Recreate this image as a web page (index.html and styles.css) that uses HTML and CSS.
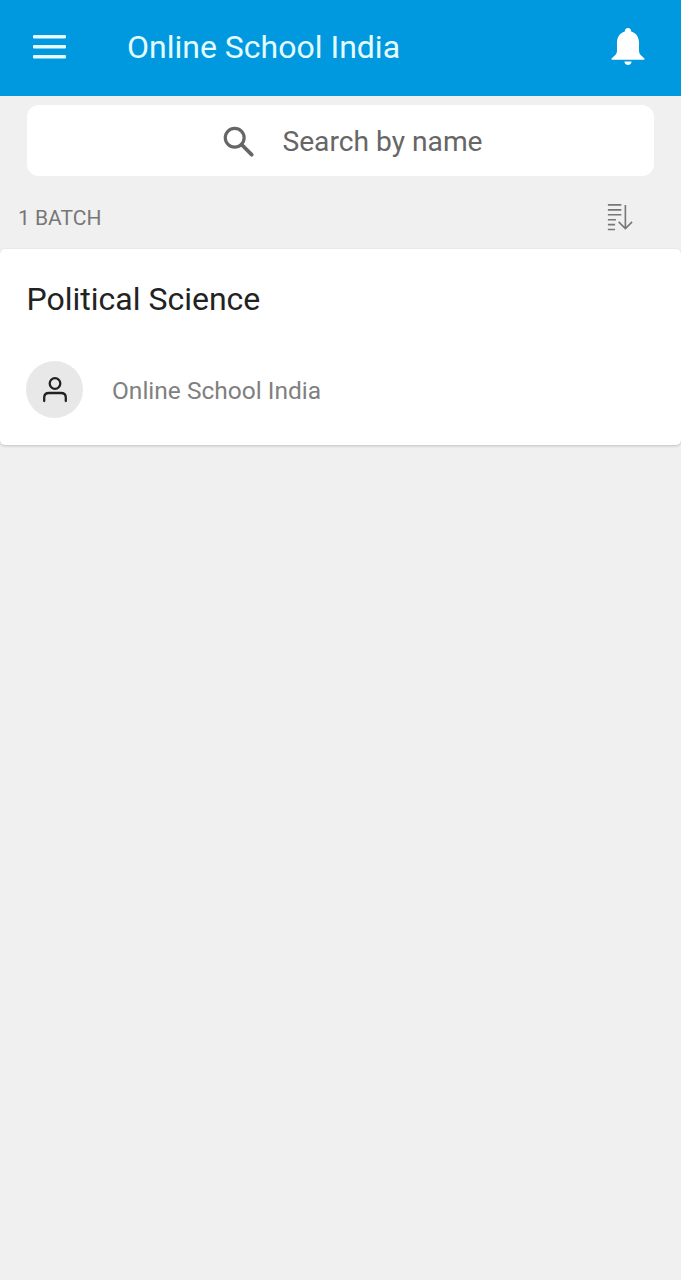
FILE: index.html
```html
<!DOCTYPE html>
<html>
<head>
  <title>Online School India</title>
  <link rel="stylesheet" href="styles.css">
</head>
<body>
  <header class="app-bar">
    <svg class="menu-icon" width="34" height="24" viewBox="0 0 34 24">
      <rect x="0" y="0" width="33" height="3.4" rx="1" fill="#e4fbff"/>
      <rect x="0" y="10" width="33" height="3.4" rx="1" fill="#e4fbff"/>
      <rect x="0" y="20" width="33" height="3.4" rx="1" fill="#e4fbff"/>
    </svg>
    <div class="app-title">Online School India</div>
    <svg class="bell-icon" width="34" height="40" viewBox="0 0 34 40">
      <path d="M17 0c-2 0-3.200 1.500-3.200 3.400C8.500 4.900 6 9.300 6 14.500V23c0 2.800-2 4.600-5.200 7.200-.6.600-.4 1.600.6 1.600h31.200c1 0 1.200-1 .6-1.600C30 27.600 28 25.800 28 23v-8.500c0-5.200-2.500-9.600-7.800-11.100C20.200 1.500 19 0 17 0z" fill="#fff"/>
      <path d="M13.500 33.500h7c0 2-1.500 3.500-3.500 3.500s-3.500-1.500-3.500-3.500z" fill="#fff"/>
    </svg>
  </header>

  <div class="search-box">
    <svg class="search-icon" width="32" height="32" viewBox="0 0 34 34">
      <circle cx="13.500" cy="13.500" r="10" fill="none" stroke="#666" stroke-width="3.400"/>
      <path d="M21 21l10.500 10.500" stroke="#666" stroke-width="4" stroke-linecap="round"/>
    </svg>
    <span class="search-text">Search by name</span>
  </div>

  <div class="list-head">
    <span class="batch-count">1 BATCH</span>
    <svg class="sort-icon" width="26" height="28" viewBox="0 0 29 31">
      <g stroke="#777" stroke-width="1.800" fill="none">
        <path d="M1 2h15M1 7.500h15M1 13h15M1 18.500h9M1 24h8M1 29.500h8"/>
        <path d="M20.500 2v26M13 21l7.500 7.500 7.500-7.500"/>
      </g>
    </svg>
  </div>

  <div class="batch-card">
    <div class="batch-name">Political Science</div>
    <div class="teacher-row">
      <div class="avatar">
        <svg width="26" height="28" viewBox="0 0 26 28">
          <circle cx="13" cy="7.500" r="5.300" fill="none" stroke="#222" stroke-width="2.300"/>
          <path d="M2.200 25v-3.500c0-3 2-4.500 4.800-4.500h12c2.800 0 4.800 1.500 4.800 4.500V25" fill="none" stroke="#222" stroke-width="2.300" stroke-linecap="round"/>
        </svg>
      </div>
      <span class="teacher-name">Online School India</span>
    </div>
  </div>
</body>
</html>
```

FILE: styles.css
```css
html, body {
  height: 100%;
}

body {
  margin: 0;
  background-color: #f0f0f0;
  font-family: Roboto, Arial, sans-serif;
  overflow: hidden;
}

.app-bar {
  height: 96px;
  background-color: #0099df;
  display: flex;
  align-items: center;
  padding: 0 36px 0 33px;
  box-sizing: border-box;
}

.menu-icon {
  flex: none;
  margin-bottom: 3px;
}

.app-title {
  flex: 1;
  margin-left: 60px;
  padding-bottom: 2px;
  font-size: 32px;
  color: #e4fbff;
}

.bell-icon {
  flex: none;
}

.search-box {
  height: 71px;
  margin: 9px 27px 0 27px;
  background-color: #fff;
  border-radius: 12px;
  display: flex;
  align-items: center;
  justify-content: center;
  padding-left: 24px;
}

.search-icon {
  margin-right: 28px;
}

.search-text {
  padding-top: 2px;
  font-size: 28.200px;
  color: #666;
}

.list-head {
  height: 73px;
  display: flex;
  align-items: center;
  justify-content: space-between;
  padding: 10px 48px 0 18px;
  box-sizing: border-box;
}

.batch-count {
  font-size: 21px;
  color: #777;
}

.sort-icon {
  flex: none;
  margin-bottom: 2px;
}

.batch-card {
  height: 196px;
  background-color: #fff;
  border-radius: 5px;
  box-shadow: 0 1px 3px rgba(0, 0, 0, 0.2);
  padding: 0 26px;
  box-sizing: border-box;
}

.batch-name {
  padding-top: 30px;
  padding-left: 0.500px;
  font-size: 32px;
  line-height: 40px;
  color: #222;
}

.teacher-row {
  display: flex;
  align-items: center;
  margin-top: 42px;
}

.avatar {
  width: 57px;
  height: 57px;
  border-radius: 50%;
  background-color: #e8e8e8;
  display: flex;
  align-items: center;
  justify-content: center;
}

.teacher-name {
  margin-left: 29px;
  padding-top: 2px;
  font-size: 24.500px;
  color: #808080;
}
```
